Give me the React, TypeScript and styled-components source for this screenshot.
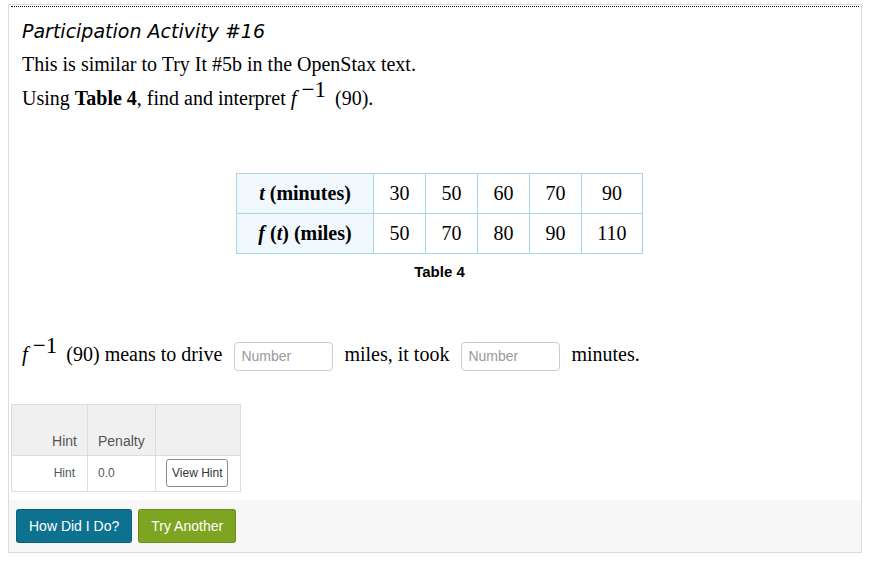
import * as React from "react"
import styled, { createGlobalStyle } from "styled-components"

const GlobalStyle = createGlobalStyle`
  html, body {
    margin: 0;
    padding: 0;
    background: #fff;
  }
  body {
    padding: 4px 0 0 8px;
  }
`

const App = () => (
  <>
    <GlobalStyle />
    <Panel>
      <Dotted />
      <Content>
        <Title>Participation Activity #16</Title>
        <Para>This is similar to Try It #5b in the OpenStax text.</Para>
        <Para>
          Using <b>Table 4</b>, find and interpret <Fn /> (90).
        </Para>

        <Figure>
          <DataTable>
            <tbody>
              <tr>
                <HeadCell>
                  <MathVar>t</MathVar> (minutes)
                </HeadCell>
                <Cell>30</Cell>
                <Cell>50</Cell>
                <Cell>60</Cell>
                <Cell>70</Cell>
                <Cell $wide>90</Cell>
              </tr>
              <tr>
                <HeadCell>
                  <MathVar>f</MathVar> (<MathVar>t</MathVar>) (miles)
                </HeadCell>
                <Cell>50</Cell>
                <Cell>70</Cell>
                <Cell>80</Cell>
                <Cell>90</Cell>
                <Cell $wide>110</Cell>
              </tr>
            </tbody>
          </DataTable>
          <Caption>Table 4</Caption>
        </Figure>

        <AnswerLine>
          <Fn /> (90) means to drive <NumInput placeholder="Number" /> miles, it
          took <NumInput placeholder="Number" /> minutes.
        </AnswerLine>
      </Content>

      <HintTable>
        <thead>
          <tr>
            <HintHead $align="right" $w={76}>Hint</HintHead>
            <HintHead $align="left" $w={68}>Penalty</HintHead>
            <HintHead $align="left" $w={85}></HintHead>
          </tr>
        </thead>
        <tbody>
          <tr>
            <HintCell $align="right">Hint</HintCell>
            <HintCell $align="left">0.0</HintCell>
            <HintCell $align="center">
              <SmallButton>View Hint</SmallButton>
            </HintCell>
          </tr>
        </tbody>
      </HintTable>

      <Footer>
        <ActionButton $bg="#0c7290">How Did I Do?</ActionButton>
        <ActionButton $bg="#7ea521">Try Another</ActionButton>
      </Footer>
    </Panel>
  </>
)

const Fn = () => (
  <FnWrap>
    <MathF>f</MathF>
    <Sup>−1</Sup>
  </FnWrap>
)

export default App

// Styles
const Panel = styled.div`
  width: 852px;
  border: 1px solid #dcdcdc;
  padding-top: 1px;
  background: #fff;
`

const Dotted = styled.div`
  margin: 0 2px 0 2px;
  border-top: 1px dotted #000;
`

const Content = styled.div`
  padding: 0 4px 0 13px;
  font-family: "Liberation Serif", "Times New Roman", serif;
  font-size: 20px;
  color: #000;
`

const Title = styled.h3`
  margin: 11px 0 7px 0;
  font-family: "Comic Sans MS", "DejaVu Sans", sans-serif;
  font-style: italic;
  font-weight: normal;
  font-size: 19px;
  line-height: 26px;
`

const Para = styled.p`
  margin: 0 0 8px 0;
  line-height: 26px;
`

const FnWrap = styled.span`
  font-family: "Liberation Serif", serif;
  white-space: nowrap;
  margin-right: 4px;
`

const MathF = styled.i`
  font-size: 21px;
`

const Sup = styled.sup`
  font-size: 23px;
  vertical-align: 8px;
  line-height: 0;
  margin-left: 5px;
`

const Figure = styled.div`
  display: flex;
  flex-direction: column;
  align-items: center;
  margin-top: 62px;
`

const DataTable = styled.table`
  border-collapse: collapse;
  font-family: "Liberation Serif", serif;
  font-size: 20px;
`

const HeadCell = styled.td`
  background: #f0f8fd;
  border: 1px solid #a9d6e3;
  font-weight: bold;
  text-align: center;
  height: 39px;
  padding: 0;
  width: 136px;
  white-space: nowrap;
`

const MathVar = styled.i`
  font-weight: bold;
`

const Cell = styled.td<{ $wide?: boolean }>`
  border: 1px solid #a9d6e3;
  text-align: center;
  height: 39px;
  padding: 0;
  width: ${(p) => (p.$wide ? 60 : 51)}px;
`

const Caption = styled.div`
  margin-top: 9px;
  font-family: "Liberation Sans", Arial, sans-serif;
  font-weight: bold;
  font-size: 15px;
`

const AnswerLine = styled.div`
  margin-top: 59px;
  line-height: 30px;
  white-space: nowrap;

  & > input {
    margin: 0 6px 0 7px;
  }
`

const NumInput = styled.input`
  width: 99px;
  height: 29px;
  box-sizing: border-box;
  vertical-align: middle;
  border: 1px solid #ccc;
  border-radius: 4px;
  padding: 0 6px;
  font-family: "Liberation Sans", Arial, sans-serif;
  font-size: 14px;
  &::placeholder {
    color: #999;
  }
`

const HintTable = styled.table`
  margin: 33px 0 0 2px;
  border-collapse: collapse;
  font-family: "Liberation Sans", Arial, sans-serif;
  color: #555;
`

const HintHead = styled.th<{ $align: string; $w: number }>`
  background: #f0f0f0;
  border: 1px solid #ddd;
  height: 51px;
  width: ${(p) => p.$w}px;
  box-sizing: border-box;
  vertical-align: bottom;
  text-align: ${(p) => p.$align};
  font-weight: normal;
  font-size: 14px;
  padding: 0 10px 6px 10px;
`

const HintCell = styled.td<{ $align: string }>`
  border: 1px solid #ddd;
  height: 36px;
  box-sizing: border-box;
  text-align: ${(p) => p.$align};
  font-size: 12px;
  padding: 0 12px 0 10px;
  white-space: nowrap;
`

const SmallButton = styled.button`
  background: #fff;
  border: 1px solid #8a8a8a;
  border-radius: 3px;
  font-family: "Liberation Sans", Arial, sans-serif;
  font-size: 12px;
  color: #333;
  padding: 0 5px;
  height: 28px;
  white-space: nowrap;
`

const Footer = styled.div`
  margin-top: 8px;
  background: #f7f7f7;
  display: flex;
  gap: 6px;
  padding: 9px 7px 9px 7px;
`

const ActionButton = styled.button<{ $bg: string }>`
  background: ${(p) => p.$bg};
  color: #fff;
  border: 1px solid rgba(0, 0, 0, 0.15);
  border-radius: 3px;
  font-family: "Liberation Sans", Arial, sans-serif;
  font-size: 14px;
  height: 34px;
  padding: 0 12px;
`
